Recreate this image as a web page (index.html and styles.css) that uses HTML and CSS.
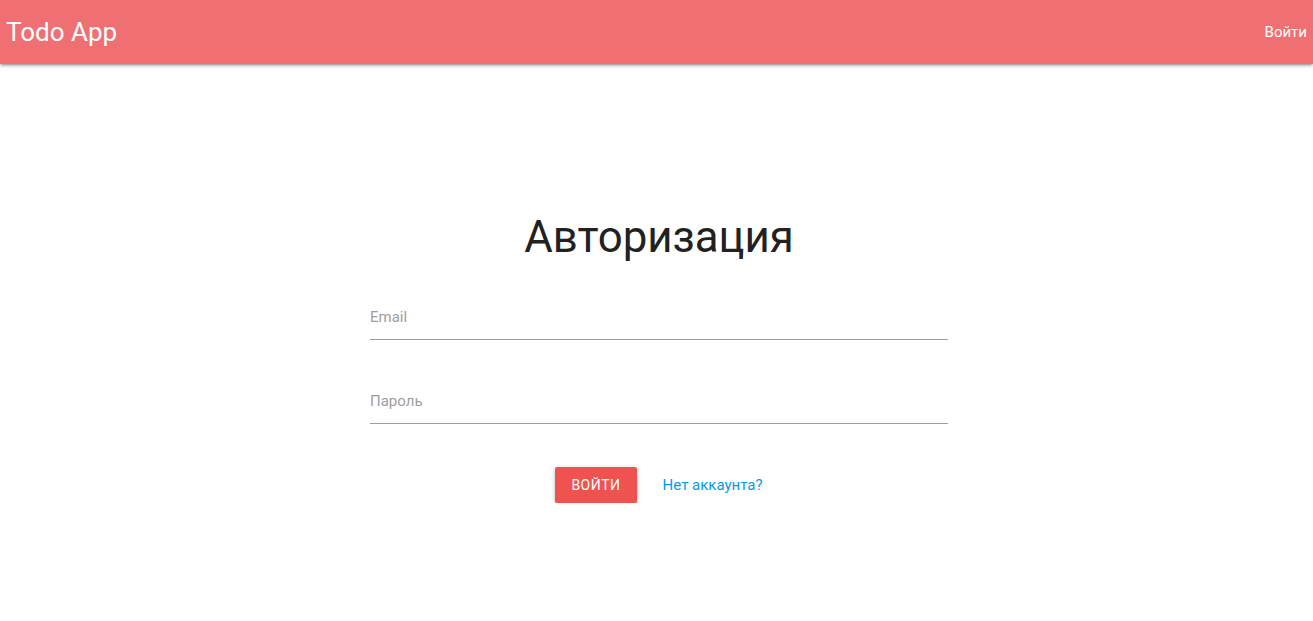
FILE: index.html
```html
<!DOCTYPE html>
<html lang="ru">
<head>
<meta charset="utf-8">
<title>Todo App</title>
<link rel="stylesheet" href="styles.css">
</head>
<body>
<header class="navbar">
  <a class="brand" href="#">Todo App</a>
  <a class="nav-link" href="#">Войти</a>
</header>
<main class="page">
  <h1 class="title">Авторизация</h1>
  <form class="form">
    <div class="field"><input class="input" type="email" placeholder="Email"></div>
    <div class="field"><input class="input" type="password" placeholder="Пароль"></div>
    <div class="actions">
      <button class="btn" type="button">Войти</button>
      <a class="link" href="#">Нет аккаунта?</a>
    </div>
  </form>
</main>
</body>
</html>
```
FILE: styles.css
```css
html { font-size: 15px; }
* { box-sizing: border-box; }
body {
  margin: 0;
  font-family: Roboto, "Liberation Sans", sans-serif;
  color: rgba(0,0,0,0.87);
  background: #fff;
}
.navbar {
  height: 64px;
  background: #f06f73;
  display: flex;
  align-items: center;
  justify-content: space-between;
  padding: 0 6px 0 6px;
  box-shadow: 0 2px 2px 0 rgba(0,0,0,0.14), 0 3px 1px -2px rgba(0,0,0,0.12), 0 1px 5px 0 rgba(0,0,0,0.2);
}
.brand {
  color: #fff;
  text-decoration: none;
  font-size: 26px;
  line-height: 64px;
}
.nav-link {
  color: #fff;
  text-decoration: none;
  font-size: 1rem;
  line-height: 64px;
}
.page {
  display: flex;
  flex-direction: column;
  align-items: center;
  padding: 149px 0 0 5px;
}
.title {
  margin: 0;
  font-size: 2.92rem;
  font-weight: 400;
  line-height: 48px;
  color: #212121;
}
.form {
  width: 578px;
  margin-top: 33px;
}
.field {
  margin-bottom: 38px;
}
.field:nth-child(2) { margin-bottom: 43px; }
.input {
  display: block;
  width: 100%;
  height: 46px;
  border: none;
  border-bottom: 1px solid #9e9e9e;
  outline: none;
  padding: 0;
  font-family: inherit;
  font-size: 1rem;
  background: transparent;
}
.input::placeholder { color: #9e9e9e; }
.actions {
  display: flex;
  justify-content: center;
  align-items: center;
  gap: 26px;
}
.btn {
  height: 36px;
  padding: 0 16px;
  border: none;
  border-radius: 2px;
  background: #ef5350;
  color: #fff;
  font-family: inherit;
  font-size: 14px;
  letter-spacing: .5px;
  text-transform: uppercase;
  box-shadow: 0 2px 2px 0 rgba(0,0,0,0.14), 0 3px 1px -2px rgba(0,0,0,0.12), 0 1px 5px 0 rgba(0,0,0,0.2);
}
.link {
  color: #039be5;
  text-decoration: none;
  font-size: 1rem;
}
```
